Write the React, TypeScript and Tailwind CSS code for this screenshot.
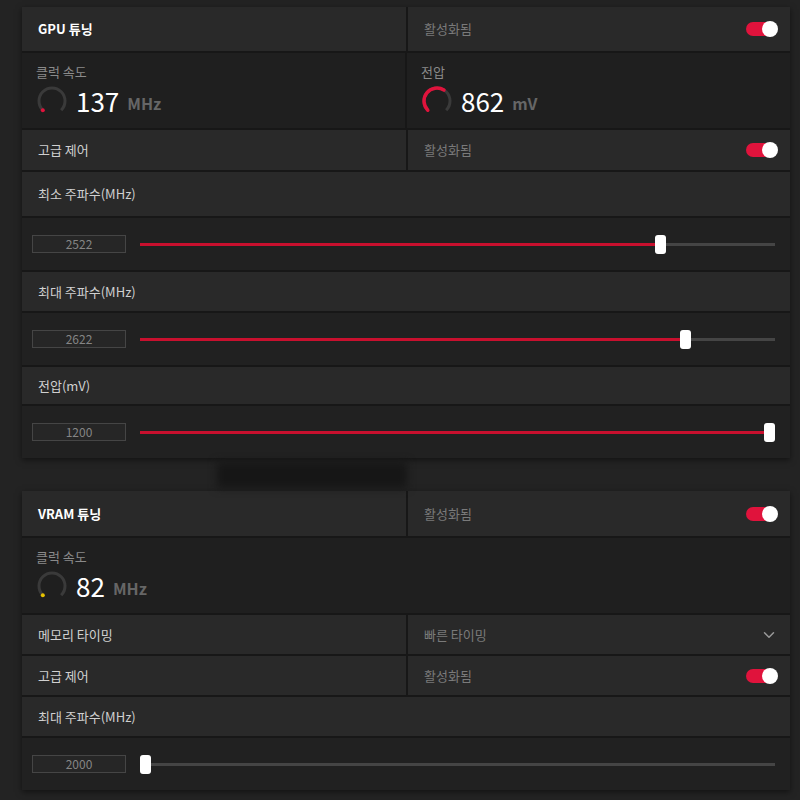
import { ChevronDown } from "lucide-react"

const font = { fontFamily: '"Noto Sans CJK KR", "Noto Sans", sans-serif' }

const Toggle = () => (
	<div className="relative w-[30px] h-[14px] rounded-full bg-[#e0133c]">
		<div className="absolute right-[-2px] top-[-1px] w-[16px] h-[16px] rounded-full bg-white" />
	</div>
)

const Gauge = ({ pct, color }: { pct: number; color: string }) => {
	const r = 13
	const cx = 16
	const cy = 16
	const pt = (deg: number) => {
		const a = (deg * Math.PI) / 180
		return `${cx + r * Math.cos(a)} ${cy + r * Math.sin(a)}`
	}
	const end = 135 + 270 * pct
	const large = 270 * pct > 180 ? 1 : 0
	return (
		<svg width="32" height="32" viewBox="0 0 32 32">
			<path d={`M ${pt(135)} A ${r} ${r} 0 1 1 ${pt(405)}`} fill="none" stroke="#3a3a3a" strokeWidth="3" />
			{pct > 0.02 ? (
				<path d={`M ${pt(135)} A ${r} ${r} 0 ${large} 1 ${pt(end)}`} fill="none" stroke={color} strokeWidth="3.5" strokeLinecap="round" />
			) : (
				<circle cx={cx + r * Math.cos((135 * Math.PI) / 180)} cy={cy + r * Math.sin((135 * Math.PI) / 180)} r="2" fill={color} />
			)}
		</svg>
	)
}

const Stat = ({ label, value, unit, pct, color, grow }: { label: string; value: string; unit: string; pct: number; color: string; grow?: boolean }) => (
	<div className={`${grow ? "flex-1" : ""} bg-[#1f1f1f] h-[75px] px-[14px] pt-[9px]`}>
		<p className="text-[13px] text-[#8a8a8a]">{label}</p>
		<div className="flex items-center gap-[8px] mt-[3px]">
			<Gauge pct={pct} color={color} />
			<span className="text-[26px] text-white leading-none">{value}</span>
			<span className="text-[16px] font-bold text-[#666] leading-none mt-[4px]">{unit}</span>
		</div>
	</div>
)

const Label = ({ text, bold }: { text: string; bold?: boolean }) => (
	<span className={bold ? "text-[13px] font-bold text-white" : "text-[13px] text-[#d0d0d0]"}>{text}</span>
)

const HalfRow = ({ left, right, h, bold, chevron }: { left: string; right: string; h: string; bold?: boolean; chevron?: boolean }) => (
	<div className={`flex gap-[2px] ${h}`}>
		<div className="flex-1 bg-[#292929] flex items-center px-[16px]">
			<Label text={left} bold={bold} />
		</div>
		<div className="flex-1 bg-[#292929] flex items-center justify-between pl-[16px] pr-[14px]">
			<span className="text-[13px] text-[#7a7a7a]">{right}</span>
			{chevron ? <ChevronDown className="w-[18px] h-[18px] text-[#9a9a9a] mr-[-2px]" strokeWidth={2} /> : <Toggle />}
		</div>
	</div>
)

const TitleRow = ({ text, h }: { text: string; h: string }) => (
	<div className={`bg-[#292929] flex items-center px-[16px] ${h}`}>
		<Label text={text} />
	</div>
)

const SliderRow = ({ value, pct }: { value: string; pct: number }) => (
	<div className="bg-[#212121] h-[52px] flex items-center pl-[10px] pr-[15px] gap-[14px]">
		<div className="w-[94px] h-[18px] border border-[#454545] bg-[#262626] flex items-center justify-center text-[12px] text-[#858585]">
			{value}
		</div>
		<div className="relative flex-1 h-[3px] bg-[#454545]">
			<div className="absolute left-0 top-0 h-[3px] bg-[#c8102e]" style={{ width: `${pct}%` }} />
			<div
				className="absolute top-[-8px] w-[11px] h-[19px] rounded-[3px] bg-white"
				style={{ left: `calc((100% - 11px) * ${pct / 100})` }}
			/>
		</div>
	</div>
)

export default function App() {
	return (
		<div className="w-[800px] h-[800px] bg-[#232323] overflow-hidden pt-[7px] pl-[22px] pr-[10px]" style={font}>
			<div className="flex flex-col gap-[2px] bg-[#171717] shadow-[0_2px_6px_rgba(0,0,0,0.5)]">
				<HalfRow left="GPU 튜닝" right="활성화됨" h="h-[44px]" bold />
				<div className="flex gap-[2px]">
					<Stat label="클럭 속도" value="137" unit="MHz" pct={0} color="#e0133c" grow />
					<Stat label="전압" value="862" unit="mV" pct={0.62} color="#e0133c" grow />
				</div>
				<HalfRow left="고급 제어" right="활성화됨" h="h-[40px]" />
				<TitleRow text="최소 주파수(MHz)" h="h-[44px]" />
				<SliderRow value="2522" pct={82.6} />
				<TitleRow text="최대 주파수(MHz)" h="h-[39px]" />
				<SliderRow value="2622" pct={86.6} />
				<TitleRow text="전압(mV)" h="h-[37px]" />
				<SliderRow value="1200" pct={100} />
			</div>
			<div className="h-[33px] flex items-center">
				<div className="ml-[195px] w-[190px] h-[26px] bg-[#161616] blur-[4px]" />
			</div>
			<div className="flex flex-col gap-[2px] bg-[#171717] shadow-[0_2px_6px_rgba(0,0,0,0.5)]">
				<HalfRow left="VRAM 튜닝" right="활성화됨" h="h-[45px]" bold />
				<Stat label="클럭 속도" value="82" unit="MHz" pct={0} color="#e6c200" />
				<HalfRow left="메모리 타이밍" right="빠른 타이밍" h="h-[39px]" chevron />
				<HalfRow left="고급 제어" right="활성화됨" h="h-[39px]" />
				<TitleRow text="최대 주파수(MHz)" h="h-[39px]" />
				<SliderRow value="2000" pct={0} />
			</div>
		</div>
	)
}
